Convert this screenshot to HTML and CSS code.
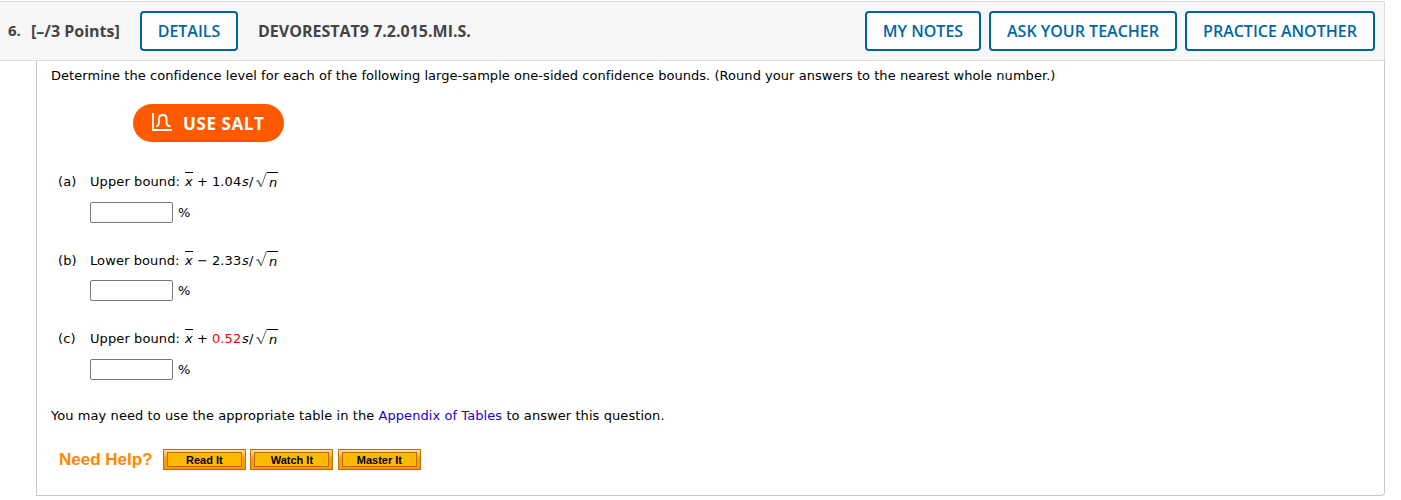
FILE: index.html
```
<!DOCTYPE html>
<html lang="en">
<head>
    <meta charset="UTF-8">
    <meta name="viewport" content="width=device-width, initial-scale=1.0">
    <title>Question 6 - DEVORESTAT9 7.2.015.MI.S.</title>
    <link rel="stylesheet" href="styles.css">
</head>
<body>
    <div class="question-header">
        <span class="number">6.</span>
        <span class="points">[–/3 Points]</span>
        <button class="btn details">DETAILS</button>
        <span class="question-name">DEVORESTAT9 7.2.015.MI.S.</span>
        <div class="actions">
            <button class="btn notes">MY NOTES</button>
            <button class="btn teacher">ASK YOUR TEACHER</button>
            <button class="btn practice">PRACTICE ANOTHER</button>
        </div>
    </div>

    <div class="question-body">
        <p class="intro">Determine the confidence level for each of the following large-sample one-sided confidence bounds. (Round your answers to the nearest whole number.)</p>

        <button class="salt">
            <svg width="20" height="18" viewBox="0 0 20 18" fill="none" stroke="#fff" stroke-width="1.8">
                <path d="M1 0V17H20"/>
                <path d="M4 13.3C6.5 13.3 7 12 7 9V5.5C7 .8 14.5 .8 14.5 5.5V9C14.5 12 15.5 13.3 18.5 13.3"/>
            </svg>
            <span>USE SALT</span>
        </button>

        <div class="part">
            <span class="letter">(a)</span>
            <div>
                <div class="bound"><span class="label">Upper bound:</span><i class="bar">x</i><span class="sign">+</span><span class="value">1.04</span><i class="s">s</i><span class="slash">/</span><svg class="root" width="11" height="16" viewBox="0 0 11 16" fill="none" stroke="#666"><path d="M0 9.5L2 8.3" /><path d="M2 8.3L5 14.5" stroke-width="1.6"/><path d="M5 15L10.5 .5"/></svg><i class="radicand">n</i></div>
                <div class="answer"><input type="text"><span>%</span></div>
            </div>
        </div>

        <div class="part middle">
            <span class="letter">(b)</span>
            <div>
                <div class="bound"><span class="label">Lower bound:</span><i class="bar">x</i><span class="sign">−</span><span class="value">2.33</span><i class="s">s</i><span class="slash">/</span><svg class="root" width="11" height="16" viewBox="0 0 11 16" fill="none" stroke="#666"><path d="M0 9.5L2 8.3" /><path d="M2 8.3L5 14.5" stroke-width="1.6"/><path d="M5 15L10.5 .5"/></svg><i class="radicand">n</i></div>
                <div class="answer"><input type="text"><span>%</span></div>
            </div>
        </div>

        <div class="part">
            <span class="letter">(c)</span>
            <div>
                <div class="bound"><span class="label">Upper bound:</span><i class="bar">x</i><span class="sign">+</span><span class="value random">0.52</span><i class="s">s</i><span class="slash">/</span><svg class="root" width="11" height="16" viewBox="0 0 11 16" fill="none" stroke="#666"><path d="M0 9.5L2 8.3" /><path d="M2 8.3L5 14.5" stroke-width="1.6"/><path d="M5 15L10.5 .5"/></svg><i class="radicand">n</i></div>
                <div class="answer"><input type="text"><span>%</span></div>
            </div>
        </div>

        <p class="tables">You may need to use the appropriate table in the <a href="#">Appendix of Tables</a> to answer this question.</p>

        <div class="help">
            <span class="help-title">Need Help?</span>
            <button class="help-btn"><span>Read It</span></button>
            <button class="help-btn"><span>Watch It</span></button>
            <button class="help-btn"><span>Master It</span></button>
        </div>
    </div>
</body>
</html>
```
FILE: styles.css
```
* {
    box-sizing: border-box;
}
body {
    margin: 0;
    padding-top: 1px;
    background: #fff;
    color: #000;
    font-family: Verdana, "DejaVu Sans", sans-serif;
    font-size: 13px;
}
button {
    padding: 0;
    cursor: pointer;
}
.question-header {
    display: flex;
    align-items: center;
    width: 1385px;
    height: 60px;
    padding: 0 9px 0 8px;
    border: 1px solid #dcdcdc;
    border-left: none;
    border-radius: 0 2px 0 0;
    background: #f7f7f7;
    color: #444;
    font: bold 16px "Open Sans", sans-serif;
}
.number {
    width: 23px;
    font-size: 15px;
    line-height: 22px;
    padding-bottom: 2px;
}
.points {
    width: 109px;
}
.question-name {
    margin-left: 20px;
}
.btn {
    height: 40px;
    border: 2px solid #00629f;
    border-radius: 4px;
    background: #fff;
    color: #0067a6;
    font: 600 16px "Open Sans", sans-serif;
}
.details {
    width: 98px;
}
.actions {
    display: flex;
    gap: 8px;
    margin-left: auto;
}
.notes {
    width: 116px;
}
.teacher {
    width: 188px;
}
.practice {
    width: 190px;
}
.question-body {
    width: 1349px;
    height: 435px;
    margin-left: 36px;
    padding: 6px 14px 0;
    border: 1px solid #c8c8c8;
    border-top: none;
    border-radius: 0 0 4px 0;
}
p {
    margin: 0;
    line-height: 18px;
    white-space: nowrap;
}
.intro {
    letter-spacing: 0.043px;
    word-spacing: 0.01px;
}
.salt {
    display: flex;
    align-items: center;
    gap: 11px;
    width: 151px;
    height: 38px;
    margin: 19px 0 0 82px;
    padding-left: 19px;
    border: none;
    border-radius: 19px;
    background: #ff5a00;
    color: #fff;
    font: bold 17px "Open Sans", sans-serif;
    letter-spacing: 0.6px;
}
.salt svg {
    margin-top: -2px;
}
.part {
    display: flex;
    height: 79px;
    padding-left: 7px;
    letter-spacing: 0.1px;
}
.salt + .part {
    margin-top: 28px;
}
.middle {
    height: 78px;
}
.letter {
    width: 32px;
    line-height: 24px;
}
.bound {
    display: flex;
    height: 24px;
    line-height: 24px;
}
.label {
    width: 95px;
}
.bar,
.radicand {
    height: 18px;
    margin-top: 2px;
    border-top: 1px solid #000;
    line-height: 18px;
}
.bar {
    width: 8px;
}
.sign {
    width: 19px;
    text-align: center;
}
.value {
    width: 30px;
}
.random {
    color: #f00;
}
.s {
    width: 7px;
}
.slash {
    width: 7px;
}
.root {
    margin-top: 2px;
}
.radicand {
    width: 11px;
    padding-left: 2px;
    line-height: 19px;
}
.answer {
    display: flex;
    align-items: center;
    gap: 5px;
    margin-top: 8px;
}
.middle .answer {
    margin-top: 7px;
}
.answer input {
    width: 83px;
    height: 21px;
    border: 1px solid #767676;
    border-radius: 2px;
    background: #fff;
}
.tables {
    margin-top: 1px;
    letter-spacing: 0.075px;
}
.tables a {
    color: #20c;
    text-decoration: none;
}
.help {
    display: flex;
    align-items: center;
    gap: 4.5px;
    margin-top: 24px;
    padding-left: 8px;
}
.help-title {
    width: 99.4px;
    color: #f80;
    font: bold 17px "Liberation Sans", sans-serif;
}
.help-btn {
    width: 83px;
    height: 21px;
    padding: 2px 3px;
    border: 1px solid #b86f0c;
    background: linear-gradient(#ffe0b0, #ff9c08 45%, #ff9800);
    font: bold 11px "Liberation Sans", sans-serif;
}
.help-btn span {
    display: block;
    height: 15px;
    border: 1px solid #b86f0c;
    background: #ffb900;
    line-height: 14px;
}
```
